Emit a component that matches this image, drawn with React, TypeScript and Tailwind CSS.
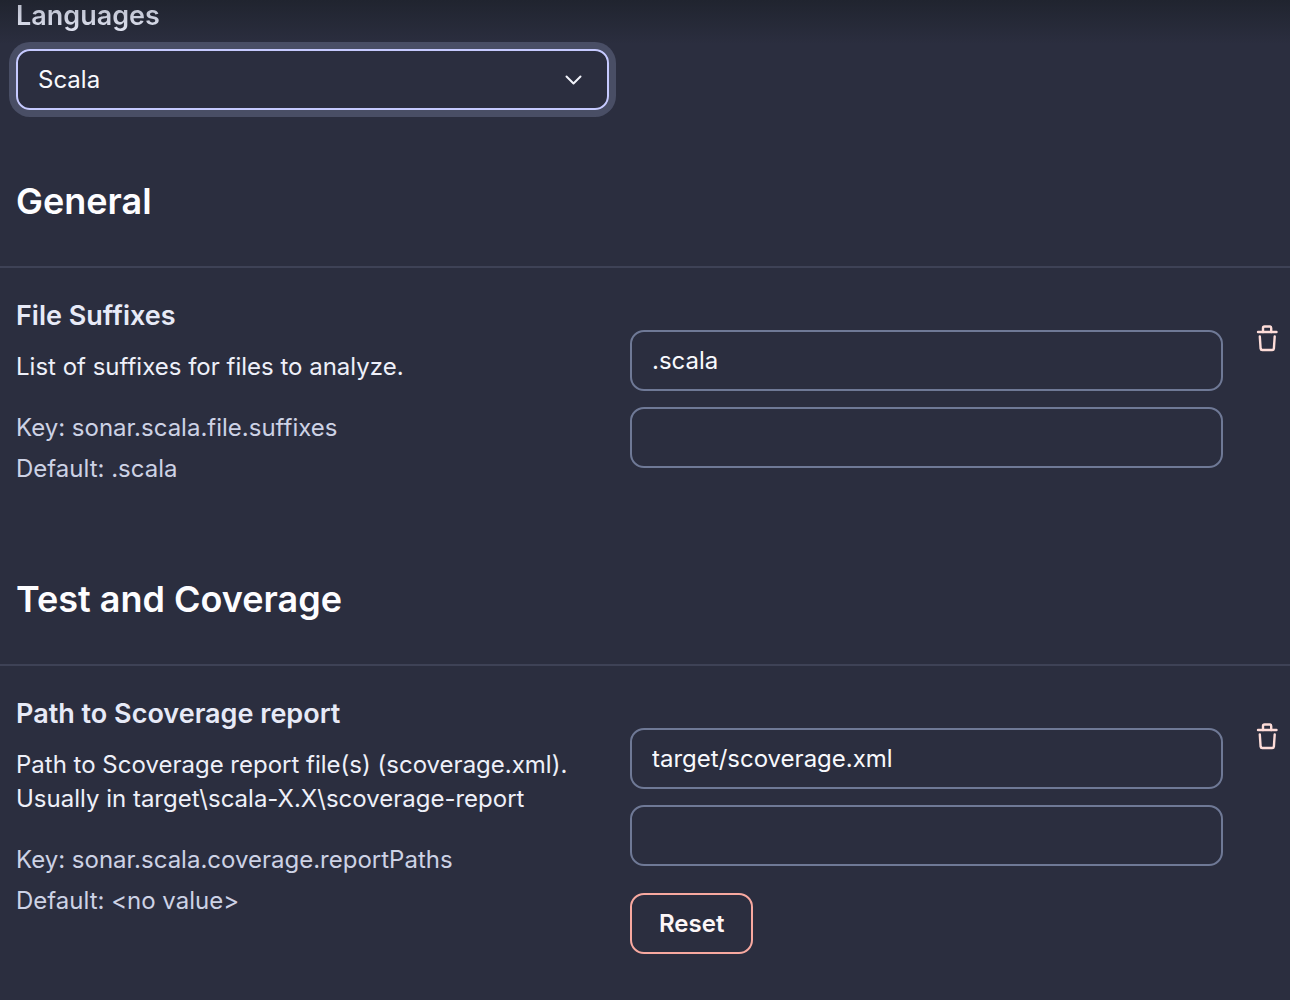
import React, { useState } from "react";

const settings = [
	{
		category: "General",
		name: "File Suffixes",
		description: ["List of suffixes for files to analyze."],
		settingKey: "sonar.scala.file.suffixes",
		defaultValue: ".scala",
		value: ".scala",
		showReset: false,
	},
	{
		category: "Test and Coverage",
		name: "Path to Scoverage report",
		description: [
			"Path to Scoverage report file(s) (scoverage.xml).",
			"Usually in target\\scala-X.X\\scoverage-report",
		],
		settingKey: "sonar.scala.coverage.reportPaths",
		defaultValue: "<no value>",
		value: "target/scoverage.xml",
		showReset: true,
	},
];

const inputStyle =
	"block w-full h-[61px] rounded-[14px] border-2 border-[#6f7996] bg-transparent px-5 text-2xl text-[#f8f9fd] outline-none";

const TrashIcon = () => (
	<svg
		width="22"
		height="28"
		viewBox="0 0 22 28"
		fill="none"
		stroke="#fddcd8"
		strokeWidth="2.400"
		strokeLinecap="round"
		strokeLinejoin="round"
		aria-hidden="true"
	>
		<path d="M2 8h18.500" />
		<path d="M7 8V4Q7 2.500 8.500 2.500h5.200Q15.200 2.500 15.200 4V8" />
		<path d="M3.800 12.500l.8 12Q4.800 26 6.300 26h9.900q1.500 0 1.700-1.500l.8-12" />
	</svg>
);

const Setting = ({ setting }: { setting: (typeof settings)[number] }) => {
	const [values, setValues] = useState([setting.value, ""]);

	const handleChange = (index: number, value: string) => {
		setValues(values.map((v, i) => (i === index ? value : v)));
	};

	return (
		<section>
			<h2 className="pl-4 text-4xl leading-10 font-semibold text-[#fdfdff]">{setting.category}</h2>
			<div className="mt-[45px] flex border-t-2 border-[#3e4256] pt-7 pl-4">
				<div className="grid min-w-0 flex-1 grid-cols-2 gap-[21px]">
					<div>
						<h3 className="text-[27px] leading-10 font-semibold text-[#e7eaf7]">{setting.name}</h3>
						<div className="mt-[14px] text-2xl leading-[34px] text-[#eef0f9]">
							{setting.description.map((line) => (
								<p key={line}>{line}</p>
							))}
						</div>
						<p className="mt-[26px] text-2xl leading-9 text-[#cdd2e5]">Key: {setting.settingKey}</p>
						<p className="mt-[5px] text-2xl leading-9 text-[#cdd2e5]">Default: {setting.defaultValue}</p>
					</div>
					<div className="pt-[34px]">
						<div className="flex flex-col gap-4">
							{values.map((value, index) => (
								<input
									key={index}
									type="text"
									aria-label={setting.name}
									className={inputStyle}
									value={value}
									onChange={(e) => handleChange(index, e.target.value)}
								/>
							))}
						</div>
						{setting.showReset && (
							<button
								type="button"
								className="mt-[27px] h-[61px] rounded-[14px] border-2 border-[#f8a9a0] px-[27px] text-2xl font-semibold text-[#fdf6f7]"
								onClick={() => setValues([setting.value, ""])}
							>
								Reset
							</button>
						)}
					</div>
				</div>
				<button
					type="button"
					aria-label="Delete"
					className="mt-7 mr-3 ml-[33px] h-7 shrink-0"
					onClick={() => handleChange(0, "")}
				>
					<TrashIcon />
				</button>
			</div>
		</section>
	);
};

const App = () => {
	const [language, setLanguage] = useState("Scala");

	return (
		<main className="min-h-screen bg-[#2b2e3f] bg-[linear-gradient(#20242f,transparent_44px)] pb-10 font-[Inter,sans-serif]">
			<div className="pr-[67px] pl-4">
				<label
					htmlFor="language"
					className="block bg-linear-to-b from-[#b4b8c6] to-[#dfe2f0] bg-clip-text text-[27px] leading-8 font-semibold text-transparent"
				>
					Languages
				</label>
				<div className="mt-[17px] grid grid-cols-2 gap-[21px]">
					<div className="relative">
						<select
							id="language"
							className="block h-[61px] w-full appearance-none rounded-[14px] border-2 border-[#c6caff] bg-transparent px-5 text-2xl text-[#f8f9fd] ring-7 ring-[#494e65] outline-none"
							value={language}
							onChange={(e) => setLanguage(e.target.value)}
						>
							<option>Scala</option>
						</select>
						<svg
							className="pointer-events-none absolute top-[25px] right-[27px]"
							width="17"
							height="12"
							viewBox="0 0 17 12"
							fill="none"
							stroke="#f1f3fa"
							strokeWidth="2"
							strokeLinecap="round"
							strokeLinejoin="round"
						>
							<path d="M1.500 2.500l7 7 7-7" />
						</svg>
					</div>
				</div>
			</div>

			<div className="mt-[71px] flex flex-col gap-[92px]">
				{settings.map((setting) => (
					<Setting key={setting.settingKey} setting={setting} />
				))}
			</div>
		</main>
	);
};

export default App;
